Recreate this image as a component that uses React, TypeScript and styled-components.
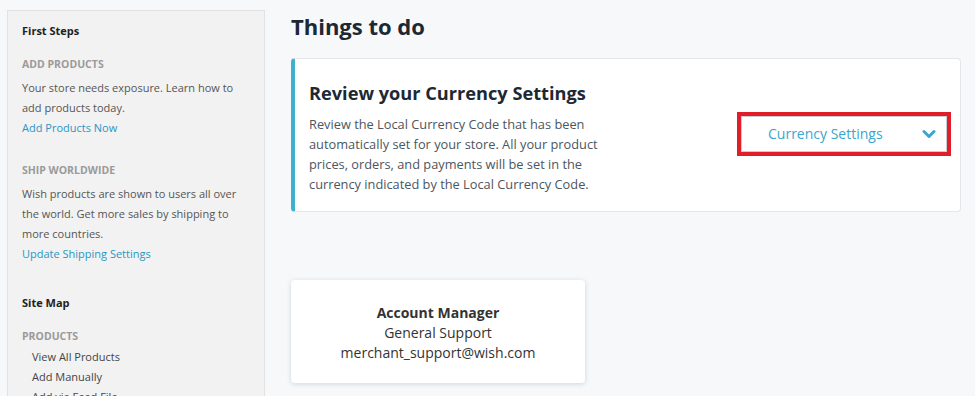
import styled, { createGlobalStyle } from "styled-components";

const GlobalStyle = createGlobalStyle`
  html, body {
    margin: 0;
    padding: 0;
    background: #f7f8fa;
    font-family: "Open Sans", Lato, sans-serif;
    overflow: hidden;
  }
`;

const Page = styled.div`
  display: flex;
  align-items: flex-start;
  padding: 10px 14px 0 7px;
  height: 396px;
  box-sizing: border-box;
`;

const Sidebar = styled.aside`
  width: 258px;
  flex-shrink: 0;
  min-height: 420px;
  box-sizing: border-box;
  background: #f2f2f2;
  border: 1px solid #e2e2e2;
  padding: 12px 14px 0 14px;
`;

const SideTitle = styled.div`
  font-size: 11px;
  font-weight: 700;
  color: #222;
  line-height: 16px;
  margin-bottom: 17px;
`;

const Section = styled.div<{ $last?: boolean }>`
  margin-bottom: ${(p) => (p.$last ? "31px" : "24px")};
`;

const Label = styled.div<{ $tight?: boolean }>`
  font-size: 10.5px;
  font-weight: 700;
  color: #9a9a9a;
  line-height: 16px;
  margin-bottom: ${(p) => (p.$tight ? "3px" : "6px")};
`;

const SideText = styled.div`
  font-size: 11px;
  line-height: 20px;
  color: #555;
`;

const SideLink = styled.a`
  display: block;
  font-size: 11px;
  line-height: 20px;
  color: #2a95c4;
  text-decoration: none;
`;

const SubItem = styled.div`
  font-size: 11px;
  line-height: 20px;
  color: #444;
  padding-left: 10px;
`;

const Main = styled.main`
  flex: 1;
  margin-left: 26px;
`;

const Heading = styled.h1`
  margin: 2px 0 18px;
  font-size: 22px;
  line-height: 28px;
  font-weight: 700;
  color: #1c2833;
`;

const TaskCard = styled.div`
  display: flex;
  align-items: center;
  justify-content: space-between;
  background: #fff;
  border: 1px solid #e3e6ea;
  border-left: 4px solid #3fb0cf;
  border-radius: 4px;
  padding: 22px 9px 17px 14px;
`;

const TaskBody = styled.div`
  width: 340px;
`;

const TaskTitle = styled.div`
  font-size: 18.2px;
  line-height: 24px;
  font-weight: 700;
  color: #1c2833;
  margin-bottom: 9px;
`;

const TaskText = styled.div`
  font-size: 12.8px;
  line-height: 20px;
  color: #4c5660;
  white-space: nowrap;
`;

const Highlight = styled.div`
  display: flex;
  border: 4px solid #e11d2a;
  margin-bottom: 8px;
`;

const DropButton = styled.button`
  display: flex;
  align-items: center;
  width: 206px;
  height: 36px;
  box-sizing: border-box;
  background: #fff;
  border: 1px solid #c9cdd2;
  padding: 0 10px 0 26px;
  font-family: "Open Sans", Lato, sans-serif;
  font-size: 14px;
  color: #39a6cf;
  cursor: pointer;
`;

const ButtonLabel = styled.span`
  flex: 1;
  text-align: left;
`;

const ContactCard = styled.div`
  width: 294px;
  box-sizing: border-box;
  margin-top: 68px;
  background: #fff;
  border-radius: 4px;
  box-shadow: 0 1px 5px rgba(40, 60, 80, 0.18);
  padding: 23px 10px 20px;
  text-align: center;
  font-size: 14px;
  line-height: 20px;
  color: #333;
`;

const ContactName = styled.div`
  font-weight: 700;
`;

const Chevron = () => (
  <svg width="14" height="10" viewBox="0 0 14 10">
    <polyline
      points="2,2.5 7,7.5 12,2.5"
      fill="none"
      stroke="#39a6cf"
      strokeWidth="3"
      strokeLinecap="round"
      strokeLinejoin="round"
    />
  </svg>
);

const App = () => {
  return (
    <>
      <GlobalStyle />
      <Page>
        <Sidebar>
          <SideTitle>First Steps</SideTitle>
          <Section>
            <Label>ADD PRODUCTS</Label>
            <SideText>
              Your store needs exposure. Learn how to
              <br />
              add products today.
            </SideText>
            <SideLink>Add Products Now</SideLink>
          </Section>
          <Section $last>
            <Label>SHIP WORLDWIDE</Label>
            <SideText>
              Wish products are shown to users all over
              <br />
              the world. Get more sales by shipping to
              <br />
              more countries.
            </SideText>
            <SideLink>Update Shipping Settings</SideLink>
          </Section>
          <SideTitle>Site Map</SideTitle>
          <Label $tight>PRODUCTS</Label>
          <SubItem>View All Products</SubItem>
          <SubItem>Add Manually</SubItem>
          <SubItem>Add via Feed File</SubItem>
        </Sidebar>
        <Main>
          <Heading>Things to do</Heading>
          <TaskCard>
            <TaskBody>
              <TaskTitle>Review your Currency Settings</TaskTitle>
              <TaskText>
                Review the Local Currency Code that has been
                <br />
                automatically set for your store. All your product
                <br />
                prices, orders, and payments will be set in the
                <br />
                currency indicated by the Local Currency Code.
              </TaskText>
            </TaskBody>
            <Highlight>
              <DropButton>
                <ButtonLabel>Currency Settings</ButtonLabel>
                <Chevron />
              </DropButton>
            </Highlight>
          </TaskCard>
          <ContactCard>
            <ContactName>Account Manager</ContactName>
            <div>General Support</div>
            <div>merchant_support@wish.com</div>
          </ContactCard>
        </Main>
      </Page>
    </>
  );
};

export default App;
